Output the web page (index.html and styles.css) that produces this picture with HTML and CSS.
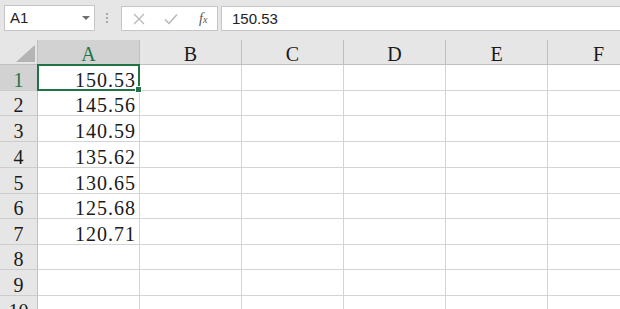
FILE: index.html
```html
<!DOCTYPE html>
<html lang="en">
<head>
  <meta charset="UTF-8">
  <title>Sheet1</title>
  <link rel="stylesheet" href="styles.css">
</head>
<body>
  <div class="toolbar">
    <div class="name-box">A1<span class="drop"></span></div>
    <div class="grip"><i></i><i></i><i></i></div>
    <div class="fx-box">
      <svg class="ico" width="12" height="12" viewBox="0 0 12 12"><path d="M1 1L11 11M11 1L1 11" stroke="#b8b8b8" stroke-width="1.3" fill="none"/></svg>
      <svg class="ico" width="14" height="12" viewBox="0 0 14 12"><path d="M1 6.5L5 10.5L13 1.5" stroke="#b8b8b8" stroke-width="1.5" fill="none"/></svg>
      <span class="fx">f<sub>x</sub></span>
    </div>
    <div class="formula">150.53</div>
  </div>

  <div class="sheet">
    <div class="corner"></div>
    <div class="hd sel">A</div>
    <div class="hd">B</div>
    <div class="hd">C</div>
    <div class="hd">D</div>
    <div class="hd">E</div>
    <div class="hd">F</div>

    <div class="rh sel">1</div>
    <div class="cell active">150.53<span class="frame"><span class="handle"></span></span></div>
    <div class="cell"></div><div class="cell"></div><div class="cell"></div><div class="cell"></div><div class="cell"></div>

    <div class="rh">2</div>
    <div class="cell">145.56</div>
    <div class="cell"></div><div class="cell"></div><div class="cell"></div><div class="cell"></div><div class="cell"></div>

    <div class="rh">3</div>
    <div class="cell">140.59</div>
    <div class="cell"></div><div class="cell"></div><div class="cell"></div><div class="cell"></div><div class="cell"></div>

    <div class="rh">4</div>
    <div class="cell">135.62</div>
    <div class="cell"></div><div class="cell"></div><div class="cell"></div><div class="cell"></div><div class="cell"></div>

    <div class="rh">5</div>
    <div class="cell">130.65</div>
    <div class="cell"></div><div class="cell"></div><div class="cell"></div><div class="cell"></div><div class="cell"></div>

    <div class="rh">6</div>
    <div class="cell">125.68</div>
    <div class="cell"></div><div class="cell"></div><div class="cell"></div><div class="cell"></div><div class="cell"></div>

    <div class="rh">7</div>
    <div class="cell">120.71</div>
    <div class="cell"></div><div class="cell"></div><div class="cell"></div><div class="cell"></div><div class="cell"></div>

    <div class="rh">8</div>
    <div class="cell"></div><div class="cell"></div><div class="cell"></div><div class="cell"></div><div class="cell"></div><div class="cell"></div>

    <div class="rh">9</div>
    <div class="cell"></div><div class="cell"></div><div class="cell"></div><div class="cell"></div><div class="cell"></div><div class="cell"></div>

    <div class="rh">10</div>
    <div class="cell"></div><div class="cell"></div><div class="cell"></div><div class="cell"></div><div class="cell"></div><div class="cell"></div>
  </div>
</body>
</html>
```

FILE: styles.css
```css
:root {
  --bar: #e6e6e6;
  --head: #e6e6e6;
  --head-sel: #d2d2d2;
  --grid: #d4d4d4;
  --head-line: #c0c0c0;
  --green: #217346;
}

body {
  margin: 0;
  width: 620px;
  height: 309px;
  overflow: hidden;
  background: #fff;
  font-family: "Liberation Serif", "Noto Sans CJK SC", serif;
}

/* formula bar */
.toolbar {
  height: 40px;
  box-sizing: border-box;
  background: var(--bar);
  display: flex;
  align-items: flex-start;
  padding: 5px 0 0 4px;
  font-family: "Liberation Sans", "Noto Sans CJK SC", sans-serif;
  font-size: 15px;
  color: #222;
}

.name-box {
  position: relative;
  width: 91px;
  height: 26px;
  box-sizing: border-box;
  background: #fff;
  border: 1px solid #c6c6c6;
  padding-left: 5px;
  line-height: 24px;
}

.drop {
  position: absolute;
  right: 4px;
  top: 10px;
  border-left: 4px solid transparent;
  border-right: 4px solid transparent;
  border-top: 4px solid #6f6f6f;
}

.grip {
  width: 3px;
  margin: 8px 12px 0 11px;
  display: flex;
  flex-direction: column;
  gap: 2px;
}

.grip i {
  width: 2px;
  height: 2px;
  background: #a8a8a8;
}

.fx-box {
  width: 97px;
  height: 25px;
  margin-top: 1px;
  box-sizing: border-box;
  background: #fff;
  border: 1px solid #c6c6c6;
  display: flex;
  align-items: center;
  padding-left: 11px;
  gap: 19px;
}

.fx {
  font-family: "Liberation Serif", serif;
  font-style: italic;
  font-size: 14px;
  color: #555;
  margin-left: 2px;
}

.fx sub {
  font-size: 10px;
  vertical-align: 0;
}

.formula {
  flex: 1;
  height: 25px;
  margin: 1px 0 0 3px;
  box-sizing: border-box;
  background: #fff;
  border: 1px solid #c6c6c6;
  border-right: none;
  padding-left: 10px;
  line-height: 23px;
}

/* grid */
.sheet {
  display: grid;
  grid-template-columns: 38px repeat(6, 102px);
  grid-template-rows: 25px 26px 25px 26px 26px 26px 25px 26px 25px 26px 26px;
  font-size: 20px;
  color: #1a1a1a;
}

.sheet > div {
  box-sizing: border-box;
  border-right: 1px solid var(--grid);
  border-bottom: 1px solid var(--grid);
  display: flex;
  align-items: flex-end;
  line-height: 1;
}

.corner {
  position: relative;
  background: var(--head);
  border-color: var(--head-line) !important;
}

.corner::after {
  content: "";
  position: absolute;
  right: 2px;
  bottom: 2px;
  border-left: 19px solid transparent;
  border-bottom: 17px solid #b4b4b4;
}

.hd {
  background: var(--head);
  justify-content: center;
  border-color: var(--head-line) !important;
}

.rh {
  background: var(--head);
  justify-content: center;
  border-right-color: var(--head-line) !important;
  border-bottom-color: #cdcdcd !important;
}

.sel {
  background: var(--head-sel);
  color: var(--green);
}

.cell {
  justify-content: flex-end;
  padding-right: 3px;
  letter-spacing: 1px;
}

.active {
  position: relative;
}

.frame {
  position: absolute;
  left: -1px;
  top: -1px;
  right: -1px;
  bottom: -1px;
  border: 2px solid var(--green);
}

.handle {
  position: absolute;
  right: -4px;
  bottom: -4px;
  width: 5px;
  height: 5px;
  background: var(--green);
  border: 1px solid #fff;
}
```
